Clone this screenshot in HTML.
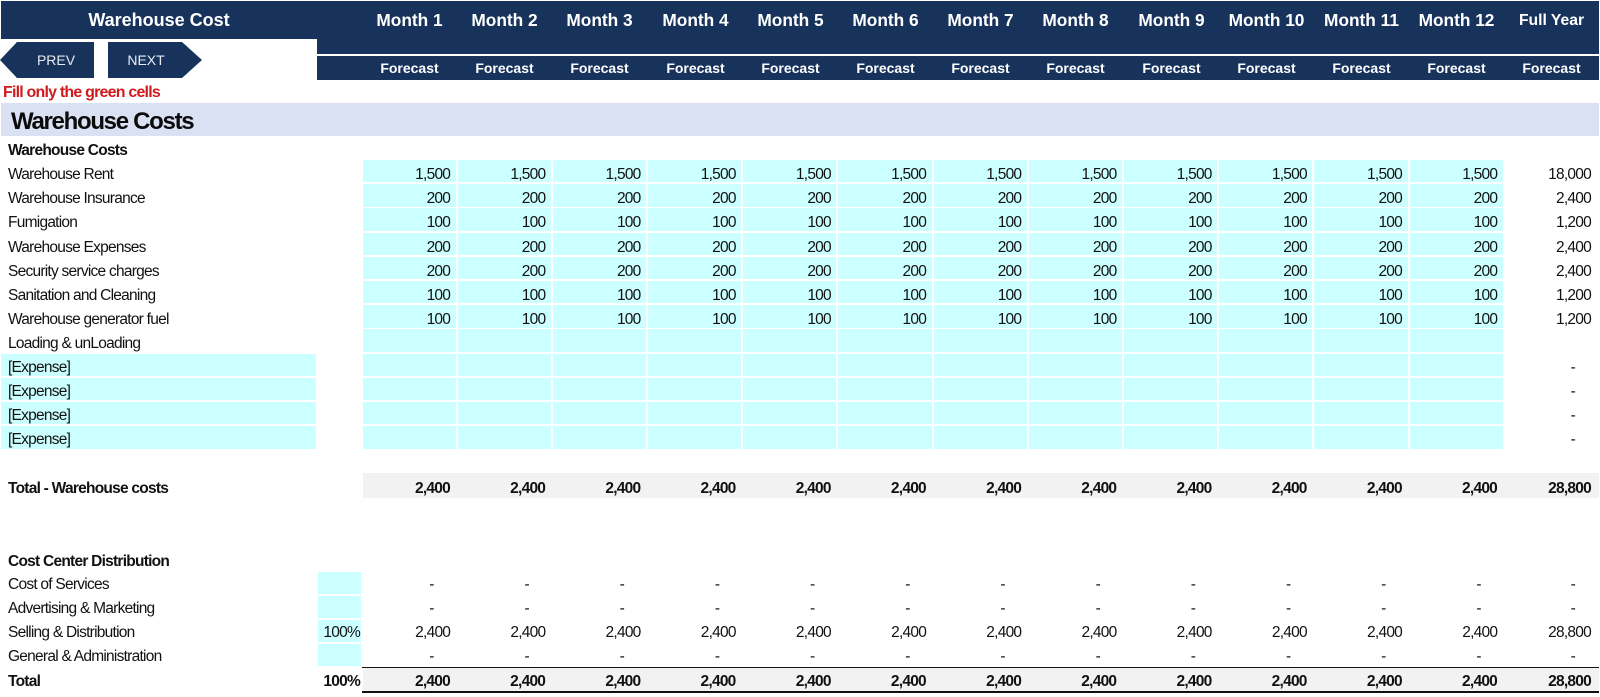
<!DOCTYPE html>
<html><head><meta charset="utf-8"><title>Warehouse Cost</title>
<style>
html,body{margin:0;padding:0;background:#fff}
body{position:relative;width:1600px;height:694px;overflow:hidden;font-family:"Liberation Sans",Arial,sans-serif;color:#111}
.n{position:absolute;background:#17335c}
.h{position:absolute;top:0;height:40px;line-height:41px;text-align:center;color:#fff;font-weight:bold;font-size:17.3px;white-space:nowrap}
.f{position:absolute;top:56px;height:24px;line-height:24px;text-align:center;color:#fff;font-weight:bold;font-size:14px}
.r{position:absolute;left:0;width:1600px;height:22.4px;display:grid;grid-template-columns:318px 44.5px repeat(12,95.2px) 1fr;grid-template-rows:22.4px;font-size:15.5px;letter-spacing:-.75px;line-height:27px;white-space:nowrap}
.r span{display:block;padding-left:7px;margin:0 2px 0 1px}
.r u{display:block;text-decoration:none;text-align:right;padding-right:5.5px;border-right:2.2px solid transparent;background-clip:padding-box}
.r em{display:block;font-style:normal;text-align:right;padding-right:1px;margin-right:1.5px}
.r>*{height:22.4px;box-sizing:border-box}
.r :last-child{padding-right:9px;border:0}
.g{line-height:29px}
.b{line-height:29px;font-weight:bold}
.g u{background-color:#ccffff}
.g :last-child{background:none}
.x{line-height:27px}
.x span{background:#ccffff}
.c{line-height:25px}
.c em{background:#ccffff}
.d u{padding-right:22px}
.d :last-child{padding-right:25px}
.t{height:25px;line-height:32px;grid-template-rows:25px}
.t>*{height:25px}
.t u{background:#f2f2f2;border:0;padding-right:7.7px}
.t :last-child{background:#f2f2f2;margin-right:1px;padding-right:8px}
</style></head><body>

<div class="n" style="left:1px;top:1px;width:316px;height:38px"></div>
<div class="n" style="left:317px;top:1px;width:1282px;height:53px"></div>
<div class="n" style="left:317px;top:56px;width:1282px;height:24px"></div>
<div class="h" style="left:1px;width:316px;font-size:18px">Warehouse Cost</div>
<div class="h" style="left:362px;width:95px">Month 1</div>
<div class="h" style="left:457px;width:95px">Month 2</div>
<div class="h" style="left:552px;width:95px">Month 3</div>
<div class="h" style="left:648px;width:95px">Month 4</div>
<div class="h" style="left:743px;width:95px">Month 5</div>
<div class="h" style="left:838px;width:95px">Month 6</div>
<div class="h" style="left:933px;width:95px">Month 7</div>
<div class="h" style="left:1028px;width:95px">Month 8</div>
<div class="h" style="left:1124px;width:95px">Month 9</div>
<div class="h" style="left:1219px;width:95px">Month 10</div>
<div class="h" style="left:1314px;width:95px">Month 11</div>
<div class="h" style="left:1409px;width:95px">Month 12</div>
<div class="h" style="left:1504px;width:95px;font-size:15.7px">Full Year</div>
<div class="f" style="left:362px;width:95px">Forecast</div>
<div class="f" style="left:457px;width:95px">Forecast</div>
<div class="f" style="left:552px;width:95px">Forecast</div>
<div class="f" style="left:648px;width:95px">Forecast</div>
<div class="f" style="left:743px;width:95px">Forecast</div>
<div class="f" style="left:838px;width:95px">Forecast</div>
<div class="f" style="left:933px;width:95px">Forecast</div>
<div class="f" style="left:1028px;width:95px">Forecast</div>
<div class="f" style="left:1124px;width:95px">Forecast</div>
<div class="f" style="left:1219px;width:95px">Forecast</div>
<div class="f" style="left:1314px;width:95px">Forecast</div>
<div class="f" style="left:1409px;width:95px">Forecast</div>
<div class="f" style="left:1504px;width:95px">Forecast</div>

<svg style="position:absolute;left:0;top:0" width="210" height="82"><polygon points="0,60 17,42 94,42 94,78 17,78" fill="#17335c"/><polygon points="108,42 182,42 202,60 182,78 108,78" fill="#17335c"/><text x="56" y="65" text-anchor="middle" font-family="Liberation Sans" font-size="14" fill="#e8ecf2">PREV</text><text x="146" y="65" text-anchor="middle" font-family="Liberation Sans" font-size="14" fill="#e8ecf2">NEXT</text></svg>

<div style="position:absolute;left:3px;top:83px;line-height:20px;font-size:16px;font-weight:bold;letter-spacing:-.8px;color:#cf1a1e">Fill only the green cells</div>
<div style="position:absolute;left:1px;top:103px;width:1598px;height:33px;background:#d9e1f2"></div>
<div style="position:absolute;left:11px;top:103px;line-height:37px;font-size:24px;font-weight:bold;letter-spacing:-1.3px;color:#0b0b0b">Warehouse Costs</div>

<div class="r b" style="top:136px"><span>Warehouse Costs</span></div>

<div class="r g" style="top:160px"><span>Warehouse Rent</span><em></em><u>1,500</u><u>1,500</u><u>1,500</u><u>1,500</u><u>1,500</u><u>1,500</u><u>1,500</u><u>1,500</u><u>1,500</u><u>1,500</u><u>1,500</u><u>1,500</u><u>18,000</u></div>
<div class="r g" style="top:184.2px"><span>Warehouse Insurance</span><em></em><u>200</u><u>200</u><u>200</u><u>200</u><u>200</u><u>200</u><u>200</u><u>200</u><u>200</u><u>200</u><u>200</u><u>200</u><u>2,400</u></div>
<div class="r g" style="top:208.4px"><span>Fumigation</span><em></em><u>100</u><u>100</u><u>100</u><u>100</u><u>100</u><u>100</u><u>100</u><u>100</u><u>100</u><u>100</u><u>100</u><u>100</u><u>1,200</u></div>
<div class="r g" style="top:232.6px"><span>Warehouse Expenses</span><em></em><u>200</u><u>200</u><u>200</u><u>200</u><u>200</u><u>200</u><u>200</u><u>200</u><u>200</u><u>200</u><u>200</u><u>200</u><u>2,400</u></div>
<div class="r g" style="top:256.8px"><span>Security service charges</span><em></em><u>200</u><u>200</u><u>200</u><u>200</u><u>200</u><u>200</u><u>200</u><u>200</u><u>200</u><u>200</u><u>200</u><u>200</u><u>2,400</u></div>
<div class="r g" style="top:281px"><span>Sanitation and Cleaning</span><em></em><u>100</u><u>100</u><u>100</u><u>100</u><u>100</u><u>100</u><u>100</u><u>100</u><u>100</u><u>100</u><u>100</u><u>100</u><u>1,200</u></div>
<div class="r g" style="top:305.2px"><span>Warehouse generator fuel</span><em></em><u>100</u><u>100</u><u>100</u><u>100</u><u>100</u><u>100</u><u>100</u><u>100</u><u>100</u><u>100</u><u>100</u><u>100</u><u>1,200</u></div>
<div class="r g d" style="top:329.4px"><span>Loading &amp; unLoading</span><em></em><u></u><u></u><u></u><u></u><u></u><u></u><u></u><u></u><u></u><u></u><u></u><u></u><u></u></div>
<div class="r g d x" style="top:353.6px"><span>[Expense]</span><em></em><u></u><u></u><u></u><u></u><u></u><u></u><u></u><u></u><u></u><u></u><u></u><u></u><u>-</u></div>
<div class="r g d x" style="top:377.8px"><span>[Expense]</span><em></em><u></u><u></u><u></u><u></u><u></u><u></u><u></u><u></u><u></u><u></u><u></u><u></u><u>-</u></div>
<div class="r g d x" style="top:402px"><span>[Expense]</span><em></em><u></u><u></u><u></u><u></u><u></u><u></u><u></u><u></u><u></u><u></u><u></u><u></u><u>-</u></div>
<div class="r g d x" style="top:426.2px"><span>[Expense]</span><em></em><u></u><u></u><u></u><u></u><u></u><u></u><u></u><u></u><u></u><u></u><u></u><u></u><u>-</u></div>

<div class="r b t" style="top:473px"><span>Total - Warehouse costs</span><em></em><u>2,400</u><u>2,400</u><u>2,400</u><u>2,400</u><u>2,400</u><u>2,400</u><u>2,400</u><u>2,400</u><u>2,400</u><u>2,400</u><u>2,400</u><u>2,400</u><u>28,800</u></div>

<div class="r b" style="top:547px"><span>Cost Center Distribution</span></div>
<div class="r c d" style="top:572px"><span>Cost of Services</span><em></em><u>-</u><u>-</u><u>-</u><u>-</u><u>-</u><u>-</u><u>-</u><u>-</u><u>-</u><u>-</u><u>-</u><u>-</u><u>-</u></div>
<div class="r c d" style="top:596px"><span>Advertising &amp; Marketing</span><em></em><u>-</u><u>-</u><u>-</u><u>-</u><u>-</u><u>-</u><u>-</u><u>-</u><u>-</u><u>-</u><u>-</u><u>-</u><u>-</u></div>
<div class="r c" style="top:620px"><span>Selling &amp; Distribution</span><em>100%</em><u>2,400</u><u>2,400</u><u>2,400</u><u>2,400</u><u>2,400</u><u>2,400</u><u>2,400</u><u>2,400</u><u>2,400</u><u>2,400</u><u>2,400</u><u>2,400</u><u>28,800</u></div>
<div class="r c d" style="top:644px"><span>General &amp; Administration</span><em></em><u>-</u><u>-</u><u>-</u><u>-</u><u>-</u><u>-</u><u>-</u><u>-</u><u>-</u><u>-</u><u>-</u><u>-</u><u>-</u></div>
<div class="r b t" style="top:667px;line-height:30px"><span>Total</span><em>100%</em><u>2,400</u><u>2,400</u><u>2,400</u><u>2,400</u><u>2,400</u><u>2,400</u><u>2,400</u><u>2,400</u><u>2,400</u><u>2,400</u><u>2,400</u><u>2,400</u><u>28,800</u></div>
<div style="position:absolute;left:362px;top:667px;width:1237px;height:1px;background:#111"></div>
<div style="position:absolute;left:362px;top:691px;width:1237px;height:2px;background:#111"></div>

</body></html>
